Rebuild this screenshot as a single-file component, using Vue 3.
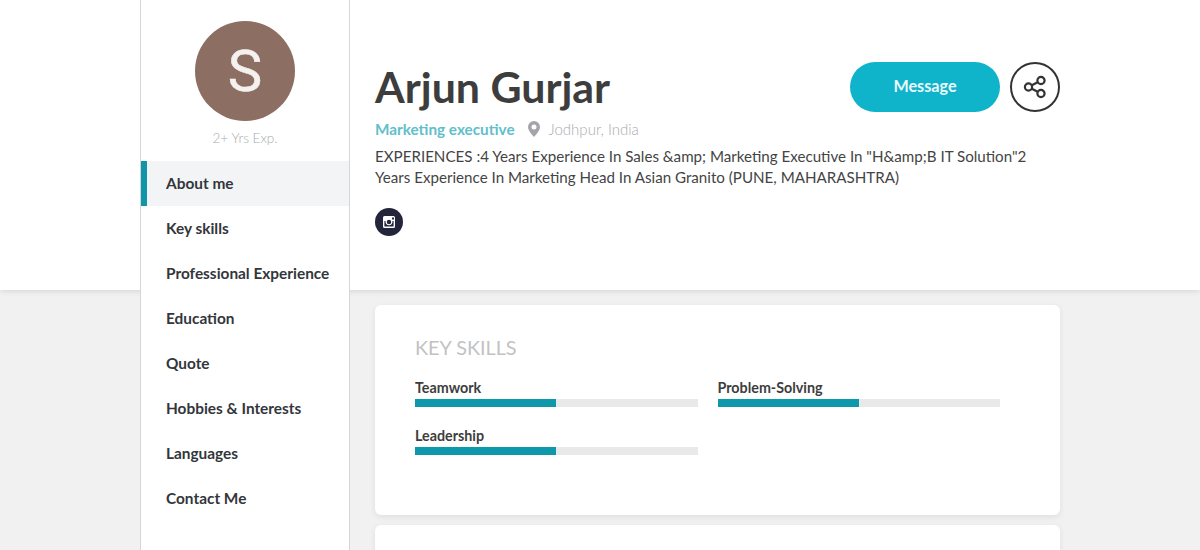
<script setup>
const navItems = [
  'About me',
  'Key skills',
  'Professional Experience',
  'Education',
  'Quote',
  'Hobbies & Interests',
  'Languages',
  'Contact Me',
]

const skills = [
  { name: 'Teamwork', level: 50 },
  { name: 'Problem-Solving', level: 50 },
  { name: 'Leadership', level: 50 },
]
</script>

<template>
  <div class="page">
    <aside class="sidebar">
      <div class="avatar">S</div>
      <div class="exp">2+ Yrs Exp.</div>
      <nav class="side-nav">
        <a
          v-for="(item, i) in navItems"
          :key="item"
          class="side-link"
          :class="{ active: i === 0 }"
        >{{ item }}</a>
      </nav>
    </aside>

    <header class="profile">
      <div class="profile-top">
        <h1 class="name">Arjun Gurjar</h1>
        <div class="actions">
          <button class="msg-btn">Message</button>
          <button class="share-btn" aria-label="Share">
            <svg width="24" height="24" viewBox="0 0 24 24" fill="none" stroke="#333" stroke-width="2.200">
              <circle cx="18" cy="5.500" r="3.600" />
              <circle cx="5.500" cy="12" r="3.600" />
              <circle cx="18" cy="18.500" r="3.600" />
              <path d="M8.800 10.300 14.700 7.200M8.800 13.700l5.900 3.100" />
            </svg>
          </button>
        </div>
      </div>
      <div class="meta">
        <span class="role">Marketing executive</span>
        <svg class="pin" width="12" height="16" viewBox="0 0 12 16">
          <path fill-rule="evenodd" fill="#a3a5ab" d="M6 0a6 6 0 0 1 6 6c0 3.600-4 7.600-6 10C4 13.600 0 9.600 0 6a6 6 0 0 1 6-6Zm0 3.500a2.500 2.500 0 1 0 0 5 2.500 2.500 0 0 0 0-5Z" />
        </svg>
        <span class="location">Jodhpur, India</span>
      </div>
      <p class="bio">EXPERIENCES :4 Years Experience In Sales &amp;amp; Marketing Executive In "H&amp;amp;B IT Solution"2 Years Experience In Marketing Head In Asian Granito (PUNE, MAHARASHTRA)</p>
      <a class="social" aria-label="Instagram">
        <svg width="14" height="14" viewBox="0 0 14 14">
          <path fill-rule="evenodd" fill="#fff" d="M2.500 1h9A1.500 1.500 0 0 1 13 2.500v9a1.500 1.500 0 0 1-1.500 1.500h-9A1.500 1.500 0 0 1 1 11.500v-9A1.500 1.500 0 0 1 2.500 1ZM10 2.500v2h2v-2h-2ZM2.400 6v5.200c0 .25.150.4.400.4h8.400c.25 0 .4-.15.4-.4V6h-1.200a3.500 3.500 0 1 1-6.800 0H2.400ZM7 4.800a2.200 2.200 0 1 0 0 4.400 2.200 2.200 0 0 0 0-4.400Z" />
        </svg>
      </a>
    </header>

    <main class="content">
      <section class="card skills-card">
        <h2 class="card-title">KEY SKILLS</h2>
        <div class="skills-grid">
          <div v-for="skill in skills" :key="skill.name" class="skill">
            <div class="skill-name">{{ skill.name }}</div>
            <div class="skill-track">
              <div class="skill-fill" :style="{ width: skill.level + '%' }"></div>
            </div>
          </div>
        </div>
      </section>
      <section class="card next-card"></section>
    </main>
  </div>
</template>

<style scoped>
.page {
  position: relative;
  height: 550px;
  overflow: hidden;
  background: #f1f1f1;
  font-family: Lato, "Open Sans", sans-serif;
  color: #3c3c3c;
}

.sidebar {
  position: absolute;
  top: -1px;
  left: 140px;
  z-index: 2;
  width: 210px;
  height: 600px;
  box-sizing: border-box;
  padding-top: 21px;
  background: #fff;
  border: 1px solid #d5d6da;
}

.avatar {
  width: 100px;
  height: 100px;
  margin: 0 auto;
  border-radius: 50%;
  background: #8d6e63;
  color: #f4f1ef;
  font-family: Roboto, sans-serif;
  font-size: 58px;
  font-weight: 400;
  -webkit-text-stroke: 0.5px #f4f1ef;
  line-height: 100px;
  text-align: center;
}

.exp {
  margin-top: 8px;
  font-size: 13.600px;
  line-height: 18px;
  font-weight: 300;
  color: #a9abb0;
  text-align: center;
}

.side-nav {
  display: flex;
  flex-direction: column;
  margin-top: 14px;
}

.side-link {
  display: block;
  height: 45px;
  padding-left: 25px;
  font-size: 15.400px;
  font-weight: 700;
  line-height: 45px;
  color: #33363b;
}

.side-link.active {
  padding-left: 19px;
  background: #f3f4f6;
  border-left: 6px solid #1195a8;
}

.profile {
  box-sizing: border-box;
  height: 290px;
  padding: 62px 140px 0 375px;
  background: #fff;
  box-shadow: 0 1px 6px rgba(0, 0, 0, 0.12);
  position: relative;
  z-index: 1;
}

.profile-top {
  display: flex;
  justify-content: space-between;
  align-items: flex-start;
  height: 50px;
}

.name {
  margin: 0;
  font-size: 42.900px;
  font-weight: 700;
  line-height: 50px;
  color: #3d3d3d;
}

.actions {
  display: flex;
  gap: 10px;
}

.msg-btn {
  width: 150px;
  height: 50px;
  padding: 0 0 3px;
  border: none;
  border-radius: 25px;
  background: #0fb3ca;
  color: #e9f8fa;
  font-family: inherit;
  font-size: 16.200px;
  font-weight: 700;
}

.share-btn {
  display: flex;
  align-items: center;
  justify-content: center;
  width: 50px;
  height: 50px;
  padding: 0;
  box-sizing: border-box;
  border: 2px solid #333;
  border-radius: 50%;
  background: #fff;
}

.meta {
  display: flex;
  align-items: center;
  height: 24px;
  margin-top: 5px;
  font-size: 15.300px;
}

.role {
  font-weight: 700;
  color: #5fbfca;
}

.pin {
  margin-left: 13px;
}

.location {
  margin-left: 9px;
  font-size: 15px;
  font-weight: 300;
  color: #a9abb0;
}

.bio {
  margin: 5px 0 0;
  font-size: 15.150px;
  line-height: 21px;
  color: #444;
}

.social {
  display: flex;
  align-items: center;
  justify-content: center;
  width: 28px;
  height: 28px;
  margin-top: 20px;
  border-radius: 50%;
  background: #23263a;
}

.content {
  padding: 15px 140px 0 375px;
  display: flex;
  flex-direction: column;
  gap: 10px;
}

.card {
  background: #fff;
  border-radius: 6px;
  box-shadow: 0 2px 6px rgba(0, 0, 0, 0.08);
}

.skills-card {
  box-sizing: border-box;
  height: 210px;
  flex-shrink: 0;
  padding: 29px 60px 0 40px;
}

.next-card {
  height: 120px;
  flex-shrink: 0;
}

.card-title {
  margin: 0;
  font-size: 19.800px;
  font-weight: 400;
  line-height: 26px;
  color: #c2c2c4;
}

.skills-grid {
  display: grid;
  grid-template-columns: 1fr 1fr;
  column-gap: 20px;
  row-gap: 19px;
  margin-top: 18px;
}

.skill-name {
  font-size: 14.300px;
  font-weight: 700;
  line-height: 20px;
  color: #3d3d3d;
}

.skill-track {
  height: 8px;
  margin-top: 1px;
  background: #e9e9e9;
}

.skill-fill {
  height: 100%;
  background: #0f97ab;
}
</style>
